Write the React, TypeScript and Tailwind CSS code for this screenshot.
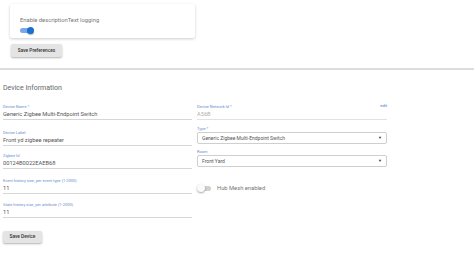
import React from 'react';

const Field: React.FC<{ label: string; value: string; className?: string }> = ({ label, value, className }) => (
  <div className={`border-b border-[#d6d6d6] pb-[1px] ${className ?? ''}`}>
    <div className="h-[5px] text-[4px] leading-[5px] text-[#6a8ccf]">{label}</div>
    <div className="mt-[2px] h-[7px] text-[5.7px] leading-[7px] text-[#555]">{value}</div>
  </div>
);

const SelectBox: React.FC<{ label: string; value: string; className?: string }> = ({ label, value, className }) => (
  <div className={className}>
    <div className="h-[5px] text-[4px] leading-[5px] text-[#6a8ccf]">{label}</div>
    <div className="mt-[1px] flex h-[12px] items-center justify-between rounded-[2px] border border-[#cfcfcf] px-[4px]">
      <span className="text-[5px] leading-[6px] text-[#555]">{value}</span>
      <span className="text-[4px] leading-[4px] text-[#333]">▼</span>
    </div>
  </div>
);

export default function App() {
  return (
    <div className="h-[265px] w-[474px] bg-white pt-[4px] font-['Roboto',sans-serif]">
      {/* preferences card */}
      <div className="ml-[10px] h-[34px] w-[185px] rounded-[2px] bg-white px-[10px] pt-[12px] shadow-[0_1px_3px_rgba(0,0,0,0.2)]">
        <div className="h-[8px] text-[5.8px] leading-[8px] text-[#777]">Enable descriptionText logging</div>
        <div className="relative mt-[3px] h-[7px] w-[14px]">
          <div className="absolute left-0 top-[1px] h-[5px] w-[12px] rounded-full bg-[#7aa8e6]" />
          <div className="absolute right-0 top-0 h-[7px] w-[7px] rounded-full bg-[#1b6fd1] shadow-[0_1px_1px_rgba(0,0,0,0.3)]" />
        </div>
      </div>
      <button className="ml-[11px] mt-[6px] flex h-[13px] w-[51px] items-center justify-center rounded-[2px] bg-[#e4e4e4] text-[4.8px] font-medium text-[#333] shadow-[0_1px_2px_rgba(0,0,0,0.3)]">
        Save Preferences
      </button>

      <div className="mt-[11px] h-[2px] w-full bg-[#dcdcdc]" />

      <div className="ml-[3px] mt-[14px] h-[9px] text-[7px] leading-[9px] text-[#666]">Device Information</div>

      <div className="mt-[10.5px] flex gap-[5px] px-[3px]">
        <div className="w-[189px]">
          <Field label="Device Name *" value="Generic Zigbee Multi-Endpoint Switch" />
          <Field className="mt-[10px]" label="Device Label" value="Front yd zigbee repeater" />
          <Field className="mt-[7px]" label="Zigbee Id" value="00124B0022EAEB68" />
          <Field className="mt-[9px]" label="Event history size, per event type (1-2000)" value="11" />
          <Field className="mt-[8px]" label="State history size, per attribute (1-2000)" value="11" />
          <button className="mt-[13px] flex h-[12px] w-[39px] items-center justify-center rounded-[2px] bg-[#e4e4e4] text-[4.8px] font-medium text-[#333] shadow-[0_1px_2px_rgba(0,0,0,0.3)]">
            Save Device
          </button>
        </div>

        <div className="w-[190px]">
          <div className="border-b border-[#e2e2e2] pb-[1px]">
            <div className="flex h-[5px] justify-between text-[4px] leading-[5px] text-[#6a8ccf]">
              <span>Device Network Id *</span>
              <span className="-mt-[1px] text-[#3d6fc9]">edit</span>
            </div>
            <div className="mt-[2px] h-[7px] text-[5.7px] leading-[7px] text-[#b0b0b0]">A56B</div>
          </div>
          <SelectBox className="mt-[6px]" label="Type *" value="Generic Zigbee Multi-Endpoint Switch" />
          <SelectBox className="mt-[5.5px]" label="Room" value="Front Yard" />

          <div className="mt-[17px] flex items-center gap-[6px]">
            <div className="relative h-[8px] w-[14px]">
              <div className="absolute right-0 top-[1.5px] h-[5px] w-[12px] rounded-full bg-[#d0d0d0]" />
              <div className="absolute left-0 top-0 h-[8px] w-[8px] rounded-full bg-[#fafafa] shadow-[0_1px_2px_rgba(0,0,0,0.35)]" />
            </div>
            <span className="text-[5.8px] leading-[8px] text-[#777]">Hub Mesh enabled</span>
          </div>
        </div>
      </div>
    </div>
  );
}
